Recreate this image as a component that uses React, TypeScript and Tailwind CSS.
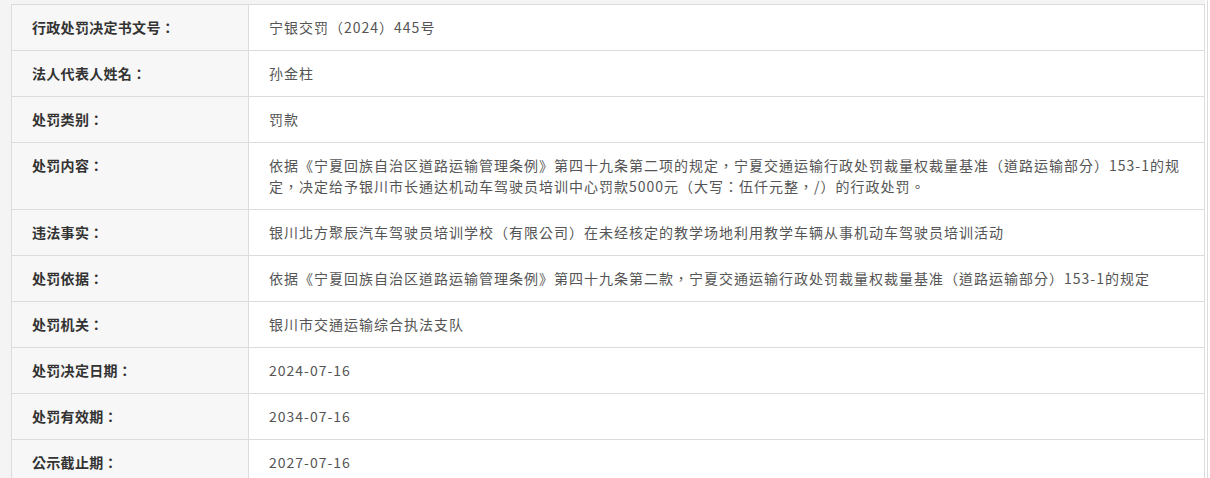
import React from "react";

const rows: { label: string; value: React.ReactNode }[] = [
  { label: "行政处罚决定书文号：", value: "宁银交罚（2024）445号" },
  { label: "法人代表人姓名：", value: "孙金柱" },
  { label: "处罚类别：", value: "罚款" },
  {
    label: "处罚内容：",
    value: (
      <>
        <span className="block whitespace-nowrap">
          依据《宁夏回族自治区道路运输管理条例》第四十九条第二项的规定，宁夏交通运输行政处罚裁量权裁量基准（道路运输部分）153-1的规
        </span>
        <span className="block whitespace-nowrap">
          定，决定给予银川市长通达机动车驾驶员培训中心罚款5000元（大写：伍仟元整，/）的行政处罚。
        </span>
      </>
    ),
  },
  {
    label: "违法事实：",
    value: "银川北方聚辰汽车驾驶员培训学校（有限公司）在未经核定的教学场地利用教学车辆从事机动车驾驶员培训活动",
  },
  {
    label: "处罚依据：",
    value: "依据《宁夏回族自治区道路运输管理条例》第四十九条第二款，宁夏交通运输行政处罚裁量权裁量基准（道路运输部分）153-1的规定",
  },
  { label: "处罚机关：", value: "银川市交通运输综合执法支队" },
  { label: "处罚决定日期：", value: "2024-07-16" },
  { label: "处罚有效期：", value: "2034-07-16" },
  { label: "公示截止期：", value: "2027-07-16" },
];

export default function App() {
  return (
    <div
      className="w-[1210px] h-[478px] overflow-hidden bg-[#f4f4f4] flex"
      style={{ fontFamily: '"Noto Sans CJK TC", "Noto Sans CJK SC", sans-serif' }}
    >
      <div className="pl-[11px] pt-[4px]">
        <div className="w-[1194px] border border-[#dcdcdc] bg-white">
          {rows.map((r, i) => (
            <div key={i} className="flex border-b border-[#dcdcdc]">
              <div className="w-[237px] shrink-0 bg-[#f7f7f7] border-r border-[#dcdcdc] px-[20px] py-[12px] text-[14px] leading-[21px] font-bold text-[#333333] tracking-[0.3px]">
                {r.label}
              </div>
              <div className="flex-1 min-w-0 pl-[20px] pr-[10px] py-[12px] text-[14px] leading-[21px] text-[#555555] tracking-[1px]">
                {r.value}
              </div>
            </div>
          ))}
        </div>
      </div>
      <div className="w-[2px] bg-white" />
      <div className="w-[1px] bg-[#dcdcdc]" />
      <div className="flex-1 bg-white" />
    </div>
  );
}
